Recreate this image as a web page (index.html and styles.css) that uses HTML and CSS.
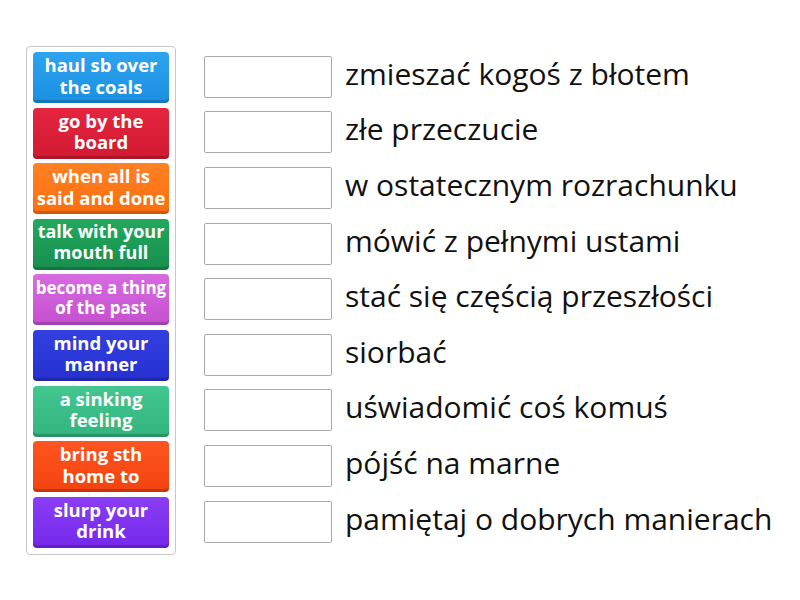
FILE: index.html
```html
<!DOCTYPE html>
<html lang="pl">
<head>
<meta charset="utf-8">
<title>Match up</title>
<link rel="stylesheet" href="styles.css">
</head>
<body>
<div class="game">
  <div class="tiles">
    <div class="tile c1">haul sb over the coals</div>
    <div class="tile c2">go by the board</div>
    <div class="tile c3">when all is said and done</div>
    <div class="tile c4 snug">talk with your mouth full</div>
    <div class="tile c5 small">become a thing of the past</div>
    <div class="tile c6">mind your manner</div>
    <div class="tile c7">a sinking feeling</div>
    <div class="tile c8">bring sth home to</div>
    <div class="tile c9">slurp your drink</div>
  </div>
  <div class="rows">
    <div class="row"><div class="slot"></div><div class="def">zmieszać kogoś z błotem</div></div>
    <div class="row"><div class="slot"></div><div class="def">złe przeczucie</div></div>
    <div class="row"><div class="slot"></div><div class="def">w ostatecznym rozrachunku</div></div>
    <div class="row"><div class="slot"></div><div class="def">mówić z pełnymi ustami</div></div>
    <div class="row"><div class="slot"></div><div class="def">stać się częścią przeszłości</div></div>
    <div class="row"><div class="slot"></div><div class="def">siorbać</div></div>
    <div class="row"><div class="slot"></div><div class="def">uświadomić coś komuś</div></div>
    <div class="row"><div class="slot"></div><div class="def">pójść na marne</div></div>
    <div class="row"><div class="slot"></div><div class="def">pamiętaj o dobrych manierach</div></div>
  </div>
</div>
</body>
</html>
```

FILE: styles.css
```css
html, body {
  margin: 0;
  padding: 0;
  background: #fff;
  width: 800px;
  height: 600px;
  overflow: hidden;
}

.game {
  display: flex;
  align-items: flex-start;
  padding: 46px 0 0 26px;
  font-family: "Open Sans", "DejaVu Sans", sans-serif;
}

.tiles {
  width: 136px;
  padding: 5px 6px 6px 6px;
  border: 1px solid #c8c8c8;
  border-radius: 4px;
  display: flex;
  flex-direction: column;
  gap: 4.6px;
}

.tile {
  height: 51px;
  box-sizing: border-box;
  border-radius: 4px;
  color: #fff;
  font-weight: 700;
  font-size: 18.5px;
  line-height: 21.5px;
  text-align: center;
  display: flex;
  align-items: center;
  justify-content: center;
  padding: 0 3px 4px;
  box-shadow: inset 0 -3px 0 rgba(0, 0, 0, 0.18);
}

.tile.snug {
  font-size: 18px;
  padding: 0 0 4px;
}

.tile.small {
  font-size: 17px;
  line-height: 20px;
  padding: 0 0 4px;
}

.c1 { background: linear-gradient(#2ea4f0, #1b8fe0); }
.c2 { background: linear-gradient(#e4253f, #d11a31); }
.c3 { background: linear-gradient(#ff8124, #fb6e0e); }
.c4 { background: linear-gradient(#22a85e, #178f4c); }
.c5 { background: linear-gradient(#d76be0, #c54fd0); }
.c6 { background: linear-gradient(#333fe0, #2530cf); }
.c7 { background: linear-gradient(#43c690, #31b47e); }
.c8 { background: linear-gradient(#ff5520, #f2430f); }
.c9 { background: linear-gradient(#8a3ef5, #7428ea); }

.rows {
  margin-left: 28px;
  margin-top: 3px;
  display: flex;
  flex-direction: column;
}

.row {
  height: 55.6px;
  display: flex;
  align-items: center;
}

.slot {
  width: 126px;
  height: 40px;
  border: 1px solid #a9a9a9;
  border-radius: 2px;
  background: #fff;
  flex: none;
}

.def {
  margin-left: 13px;
  font-size: 30px;
  line-height: 40px;
  color: #111;
  white-space: nowrap;
  padding-bottom: 6px;
}
```
